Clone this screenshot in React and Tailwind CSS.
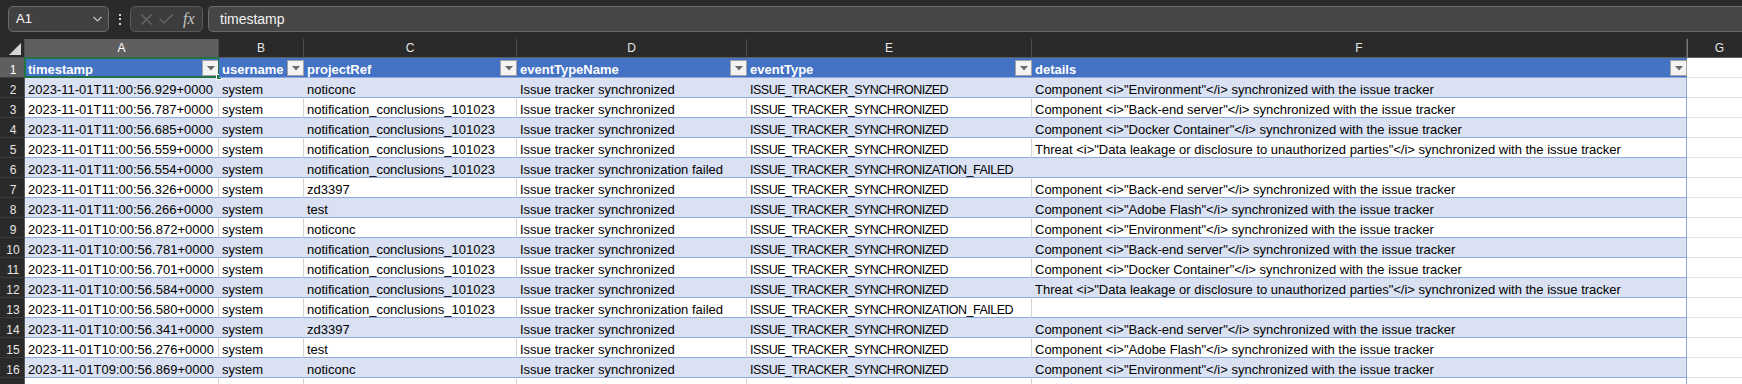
import React from "react";

const WIDTHS = ["w-[194px]", "w-[85px]", "w-[213px]", "w-[230px]", "w-[285px]", "w-[655px]"];
const LETTERS = ["A", "B", "C", "D", "E", "F"];
const HEADERS = ["timestamp", "username", "projectRef", "eventTypeName", "eventType", "details"];

const NC = "notification_conclusions_101023";
const OK = ["Issue tracker synchronized", "ISSUE_TRACKER_SYNCHRONIZED"];
const FAIL = ["Issue tracker synchronization failed", "ISSUE_TRACKER_SYNCHRONIZATION_FAILED", ""];
const comp = (name) => `Component <i>"${name}"</i> synchronized with the issue tracker`;
const THREAT = 'Threat <i>"Data leakage or disclosure to unauthorized parties"</i> synchronized with the issue tracker';

const rows = [
  ["2023-11-01T11:00:56.929+0000", "system", "noticonc", ...OK, comp("Environment")],
  ["2023-11-01T11:00:56.787+0000", "system", NC, ...OK, comp("Back-end server")],
  ["2023-11-01T11:00:56.685+0000", "system", NC, ...OK, comp("Docker Container")],
  ["2023-11-01T11:00:56.559+0000", "system", NC, ...OK, THREAT],
  ["2023-11-01T11:00:56.554+0000", "system", NC, ...FAIL],
  ["2023-11-01T11:00:56.326+0000", "system", "zd3397", ...OK, comp("Back-end server")],
  ["2023-11-01T11:00:56.266+0000", "system", "test", ...OK, comp("Adobe Flash")],
  ["2023-11-01T10:00:56.872+0000", "system", "noticonc", ...OK, comp("Environment")],
  ["2023-11-01T10:00:56.781+0000", "system", NC, ...OK, comp("Back-end server")],
  ["2023-11-01T10:00:56.701+0000", "system", NC, ...OK, comp("Docker Container")],
  ["2023-11-01T10:00:56.584+0000", "system", NC, ...OK, THREAT],
  ["2023-11-01T10:00:56.580+0000", "system", NC, ...FAIL],
  ["2023-11-01T10:00:56.341+0000", "system", "zd3397", ...OK, comp("Back-end server")],
  ["2023-11-01T10:00:56.276+0000", "system", "test", ...OK, comp("Adobe Flash")],
  ["2023-11-01T09:00:56.869+0000", "system", "noticonc", ...OK, comp("Environment")],
];

function FilterButton() {
  return (
    <div className="ml-auto mt-[2px] flex h-[16px] w-[17px] shrink-0 items-center justify-center border border-[#a3a3a3] bg-[#f3f3f3]">
      <svg width="8" height="5" viewBox="0 0 8 5">
        <polygon points="0,0 8,0 4,4.5" fill="#6b6b6b" />
      </svg>
    </div>
  );
}

function FormulaBar() {
  return (
    <div className="flex h-[39px] items-start pl-[8px] pt-[6px]">
      <div className="flex h-[26px] w-[101px] items-center justify-between rounded-[5px] border border-[#6b6b6b] bg-[#414141] pl-[7px] pr-[6px] text-[13px] text-white">
        <span>A1</span>
        <svg width="9" height="6" viewBox="0 0 9 6">
          <polyline points="0.5,0.8 4.5,4.8 8.5,0.8" fill="none" stroke="#cfcfcf" strokeWidth="1.2" />
        </svg>
      </div>
      <div className="flex h-[26px] w-[21px] flex-col items-center justify-center gap-[2.5px]">
        <div className="h-[2px] w-[2px] bg-[#d8d8d8]" />
        <div className="h-[2px] w-[2px] bg-[#d8d8d8]" />
        <div className="h-[2px] w-[2px] bg-[#d8d8d8]" />
      </div>
      <div className="flex h-[26px] w-[73px] items-center rounded-[5px] border border-[#5a5a5a] bg-[#3c3c3c] pl-[10px]">
        <svg width="11" height="11" viewBox="0 0 11 11">
          <path d="M0.5 0.5 L10.5 10.5 M10.5 0.5 L0.5 10.5" stroke="#6e6e6e" strokeWidth="1.1" />
        </svg>
        <svg className="ml-[7px]" width="14" height="10" viewBox="0 0 14 10">
          <polyline points="0.5,4.5 5,9 13.5,0.5" fill="none" stroke="#6e6e6e" strokeWidth="1.1" />
        </svg>
        <span className="ml-[10px] font-['Liberation_Serif',serif] text-[16px] italic leading-none text-[#c4c4c4]">fx</span>
      </div>
      <div className="ml-[5px] flex h-[26px] flex-1 items-center rounded-l-[5px] border border-r-0 border-[#6b6b6b] bg-[#464646] pl-[11px] text-[14px] text-[#f2f2f2]">
        timestamp
      </div>
    </div>
  );
}

function ColumnHeaders() {
  return (
    <div className="flex h-[19px]">
      <div className="relative w-[25px] shrink-0 border-b border-r border-[#4d4d4d]">
        <svg className="absolute bottom-[2px] right-[3px]" width="12" height="12" viewBox="0 0 12 12">
          <polygon points="12,0 12,12 0,12" fill="#d6d6d6" />
        </svg>
      </div>
      {LETTERS.map((l, i) => (
        <div
          key={l}
          className={`${WIDTHS[i]} flex shrink-0 items-center justify-center border-b border-r border-b-[#5e5e5e] border-r-[#4d4d4d] text-[12px] ${i === 0 ? "bg-[#5f5f5f] text-white" : "text-[#e6e6e6]"}`}
        >
          {l}
        </div>
      ))}
      <div className="flex w-[64px] shrink-0 items-center justify-center border-b border-l border-b-[#5e5e5e] border-l-[#7a7a7a] text-[12px] text-[#e6e6e6]">
        G
      </div>
    </div>
  );
}

function HeaderRow() {
  return (
    <div className="flex h-[20px]">
      <div className="w-[25px] shrink-0 border-b border-r border-b-[#3c3c3c] border-r-[#5a5a5a] bg-[#5f5f5f] pl-[2px] pt-[5px] text-center text-[12px] leading-[14px] text-white">
        1
      </div>
      {HEADERS.map((h, i) => (
        <div
          key={h}
          className={`${WIDTHS[i]} relative flex shrink-0 border-b border-[#8ea9db] bg-[#4472c4] text-[13px] font-bold leading-[14px] text-white`}
        >
          <span className="pl-[3px] pt-[5px]">{h}</span>
          <FilterButton />
          {i === 0 && (
            <div className="pointer-events-none absolute -left-[1px] -right-[1px] -top-[1px] -bottom-[1px] border-2 border-[#217346]">
              <div className="absolute -bottom-[4px] -right-[4px] h-[6px] w-[6px] border border-white bg-[#217346]" />
            </div>
          )}
        </div>
      ))}
      <div className="w-[64px] shrink-0 border-b border-r border-[#e1e1e1] bg-white" />
    </div>
  );
}

function DataRow({ n, cells, label = true }) {
  const band = n % 2 === 0;
  return (
    <div className="flex h-[20px]">
      <div className="w-[25px] shrink-0 border-b border-r border-b-[#3c3c3c] border-r-[#5a5a5a] pl-[2px] pt-[5px] text-center text-[12px] leading-[14px] text-[#e6e6e6]">
        {label ? n : null}
      </div>
      {cells.map((c, i) => (
        <div
          key={i}
          className={`${WIDTHS[i]} shrink-0 whitespace-nowrap border-b border-r border-b-[#8ea9db] px-[3px] pt-[5px] leading-[14px] text-black ${i === 4 ? "text-[12.5px] tracking-[-0.5px]" : "text-[13px]"} ${band ? "bg-[#d9e1f2]" : "bg-white"} ${i === 5 ? "border-r-[#8ea9db]" : band ? "border-r-[#d9e1f2]" : "border-r-[#d4d4d4]"}`}
        >
          {c}
        </div>
      ))}
      <div className="w-[64px] shrink-0 border-b border-r border-[#e1e1e1] bg-white" />
    </div>
  );
}

export default function App() {
  return (
    <div className="h-[384px] w-[1742px] overflow-hidden bg-[#2a2a2a] font-['Liberation_Sans',Arial,sans-serif]">
      <FormulaBar />
      <ColumnHeaders />
      <HeaderRow />
      {rows.map((r, i) => (
        <DataRow key={i} n={i + 2} cells={r} />
      ))}
      <DataRow n={17} cells={["", "", "", "", "", ""]} label={false} />
    </div>
  );
}
